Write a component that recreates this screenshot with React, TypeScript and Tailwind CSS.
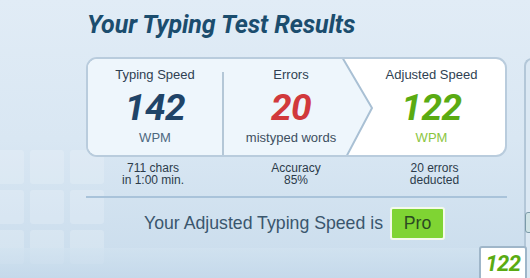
import React from "react";

const sans = { fontFamily: '"Liberation Sans", Arial, sans-serif' };
const num = { fontFamily: 'Roboto, "Open Sans", sans-serif' };

function Stat({
  label,
  value,
  unit,
  valueClass,
  unitClass,
  className,
}: {
  label: string;
  value: string;
  unit: string;
  valueClass: string;
  unitClass: string;
  className: string;
}) {
  return (
    <div className={`relative flex flex-col items-center pt-[8px] ${className}`}>
      <div className="text-[13px] leading-[16px] text-[#2f3f52]">{label}</div>
      <div
        className={`mt-[6px] text-[37px] leading-[38px] font-bold italic tracking-[-0.5px] ${valueClass}`}
        style={num}
      >
        {value}
      </div>
      <div className={`mt-[3px] text-[13px] leading-[16px] ${unitClass}`}>{unit}</div>
    </div>
  );
}

export default function App() {
  return (
    <div
      className="relative w-[530px] h-[278px] overflow-hidden bg-gradient-to-b from-[#e1ecf6] via-[#d9e7f3] to-[#c9dcec]"
      style={sans}
    >
      {/* faint keyboard keys in the background */}
      <div className="absolute left-[-10px] top-[150px] grid grid-cols-3 gap-[6px] opacity-25">
        {Array.from({ length: 9 }).map((_, i) => (
          <div key={i} className="w-[34px] h-[34px] rounded-[3px] bg-[#f3f8fc]" />
        ))}
      </div>
      <div className="absolute left-0 bottom-0 w-[480px] h-[30px] bg-gradient-to-b from-[#d2e3f0] to-[#c3d8ea] opacity-70" />

      {/* neighbour panel at the right edge */}
      <div className="absolute left-[524px] top-[58px] w-[40px] h-[240px] rounded-tl-[8px] border-l-2 border-t-2 border-[#b3c7d8] bg-[#dbe8f3]" />
      <div className="absolute left-[525px] top-[212px] w-[10px] h-[21px] rounded-[3px] border border-[#7a9aa8] bg-[#cfe3e6]" />

      <div className="relative pl-[86px] pr-[23px] pt-[9px]">
        <h1
          className="pl-[1px] text-[25px] leading-[32px] font-bold italic text-[#1b4d6e] tracking-[-0.1px]"
          style={num}
        >
          Your Typing Test Results
        </h1>

        {/* result card */}
        <div className="relative mt-[16px] h-[100px] rounded-[11px] border-2 border-[#b9ccdd] bg-white overflow-hidden">
          <svg className="absolute inset-0" width="421" height="100" viewBox="0 0 421 100">
            <polygon points="0,0 254,0 284,49 256,100 0,100" fill="#eef6fc" />
            <polyline points="254,-2 284,49 256,102" fill="none" stroke="#a9c0d4" strokeWidth="2" />
          </svg>
          <div className="relative flex h-full">
            <Stat
              label="Typing Speed"
              value="142"
              unit="WPM"
              valueClass="text-[#1f4468]"
              unitClass="text-[#4d6880]"
              className="w-[134px]"
            />
            <div className="w-[2px] mt-[13px] h-[84px] bg-[#b4c7d7]" />
            <Stat
              label="Errors"
              value="20"
              unit="mistyped words"
              valueClass="text-[#d1393c]"
              unitClass="text-[#3d4f60]"
              className="w-[134px]"
            />
            <Stat
              label="Adjusted Speed"
              value="122"
              unit="WPM"
              valueClass="text-[#5aab12]"
              unitClass="text-[#8cc63f]"
              className="flex-1"
            />
          </div>
        </div>

        {/* details under the card */}
        <div className="flex text-[12px] leading-[12px] text-[#2c3b4a] pt-[5px] pb-[10px] border-b-2 border-[#a9c3da]">
          <div className="w-[134px] text-center">
            711 chars
            <br />
            in 1:00 min.
          </div>
          <div className="w-[142px] text-center pl-[10px]">
            Accuracy
            <br />
            85%
          </div>
          <div className="flex-1 text-center">
            20 errors
            <br />
            deducted
          </div>
        </div>

        <div className="flex items-center justify-center gap-[7px] pt-[9px] pr-[4px]">
          <span className="text-[17.7px] text-[#3a566d]">Your Adjusted Typing Speed is</span>
          <span className="flex items-center justify-center w-[55px] h-[33px] rounded-[3px] border-2 border-[#f3faea] bg-[#7fd433] text-[17.7px] text-[#2b4a22]">
            Pro
          </span>
        </div>
      </div>

      {/* floating score box */}
      <div className="absolute left-[479px] top-[246px] w-[48px] h-[40px] rounded-t-[3px] border-2 border-[#9fb6c9] bg-white flex justify-center pt-[3px]">
        <span className="text-[22px] leading-[26px] font-bold italic text-[#5aab12] tracking-[-0.5px]" style={num}>
          122
        </span>
      </div>
    </div>
  );
}
